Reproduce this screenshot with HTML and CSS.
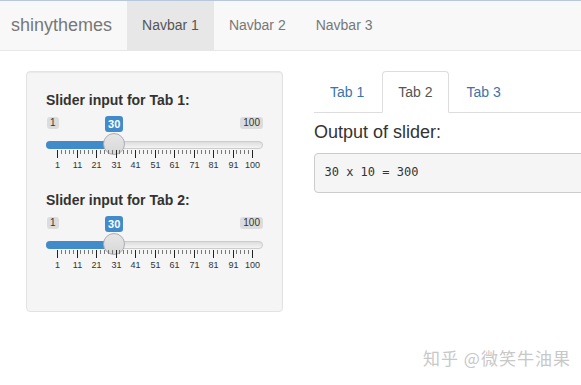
FILE: index.html
```html
<!DOCTYPE html>
<html lang="en">
<head>
    <meta charset="UTF-8">
    <title>shinythemes</title>
    <link rel="stylesheet" href="styles.css">
</head>
<body>

    <nav class="navbar">
        <span class="brand">shinythemes</span>
        <ul class="nav-links">
            <li class="active"><a>Navbar 1</a></li>
            <li><a>Navbar 2</a></li>
            <li><a>Navbar 3</a></li>
        </ul>
    </nav>

    <div class="content">
        <div class="sidebar">
            <div class="form-group">
                <label>Slider input for Tab 1:</label>
                <div class="irs" data-min="1" data-max="100" data-from="30"></div>
            </div>
            <div class="form-group">
                <label>Slider input for Tab 2:</label>
                <div class="irs" data-min="1" data-max="100" data-from="30"></div>
            </div>
        </div>

        <div class="main">
            <ul class="nav-tabs">
                <li><a>Tab 1</a></li>
                <li class="active"><a>Tab 2</a></li>
                <li><a>Tab 3</a></li>
            </ul>
            <h4>Output of slider:</h4>
            <pre>30 x 10 = 300</pre>
        </div>
    </div>

    <div class="watermark">知乎 @微笑牛油果</div>

    <script src="script.js"></script>
</body>
</html>
```

FILE: styles.css
```css
html, body {
    overflow: hidden;
}

body {
    margin: 0;
    font-family: "Liberation Sans", Arial, sans-serif;
    font-size: 14px;
    line-height: 1.42857;
    color: #333;
    background: #fff;
}

/* navbar */
.navbar {
    display: flex;
    align-items: stretch;
    height: 49px;
    background-color: #f8f8f8;
    border-top: 1px solid #b7c8de;
    border-bottom: 1px solid #e7e7e7;
}

.brand {
    padding: 0 15px 0 11px;
    font-size: 18px;
    line-height: 49px;
    color: #777;
}

.nav-links {
    display: flex;
    margin: 0;
    padding: 0;
    list-style: none;
}

.nav-links a {
    display: block;
    padding: 0 15px;
    line-height: 49px;
    color: #777;
}

.nav-links .active a {
    background-color: #e7e7e7;
    color: #555;
}

/* layout */
.content {
    display: flex;
    gap: 31px;
    padding: 20px 0 0 26px;
}

.sidebar {
    flex: 0 0 257px;
    box-sizing: border-box;
    padding: 19px 19px 20px;
    background-color: #f5f5f5;
    border: 1px solid #e3e3e3;
    border-radius: 4px;
    box-shadow: inset 0 1px 1px rgba(0, 0, 0, 0.05);
}

.form-group {
    margin-bottom: 15px;
}

.form-group label {
    display: block;
    margin-bottom: 5px;
    font-weight: bold;
}

/* slider */
.irs {
    position: relative;
    height: 60px;
}

.irs-min, .irs-max, .irs-single {
    position: absolute;
    top: 1px;
    padding: 0 3px;
    font-size: 10px;
    line-height: 12px;
    border-radius: 3px;
    background: rgba(0, 0, 0, 0.1);
    color: #333;
}

.irs-min {
    left: 1px;
}

.irs-max {
    right: 0;
}

.irs-single {
    top: 0;
    padding: 1px 3px;
    font-size: 11px;
    line-height: 14px;
    font-weight: bold;
    background: #428bca;
    color: #fff;
}

.irs-line {
    position: absolute;
    top: 25px;
    left: 0;
    right: 0;
    height: 6px;
    background: linear-gradient(to bottom, #ddd, #f4f4f4);
    border: 1px solid #ccc;
    border-radius: 8px;
}

.irs-bar {
    position: absolute;
    top: 25px;
    left: 0;
    height: 8px;
    background: #428bca;
    border-radius: 8px 0 0 8px;
}

.irs-handle {
    position: absolute;
    top: 17px;
    width: 22px;
    height: 22px;
    box-sizing: border-box;
    border: 1px solid #abadb3;
    border-radius: 50%;
    background: linear-gradient(to bottom, #e6e6e6, #d8d8d8);
}

.irs-tick {
    position: absolute;
    top: 34px;
    width: 1px;
    height: 4px;
    background: #777;
}

.irs-tick.big {
    height: 8px;
    background: #222;
}

.irs-num {
    position: absolute;
    top: 44px;
    font-size: 9px;
    line-height: 11px;
    color: #333;
    transform: translateX(-50%);
}

/* main panel */
.main {
    flex: 0 0 544px;
}

.nav-tabs {
    display: flex;
    margin: 0;
    padding: 0;
    list-style: none;
    border-bottom: 1px solid #ddd;
}

.nav-tabs li {
    margin-bottom: -1px;
}

.nav-tabs a {
    display: block;
    margin-right: 2px;
    padding: 10px 15px;
    line-height: 20px;
    color: #3a75ab;
    border: 1px solid transparent;
    border-radius: 4px 4px 0 0;
}

.nav-tabs .active a {
    color: #555;
    background-color: #fff;
    border-color: #ddd #ddd transparent;
}

h4 {
    margin: 10px 0;
    font-size: 18px;
    font-weight: normal;
    line-height: 1.1;
}

pre {
    margin: 0;
    padding: 9.5px;
    font-family: "DejaVu Sans Mono", "Liberation Mono", monospace;
    font-size: 12px;
    line-height: 19px;
    color: #333;
    background-color: #f5f5f5;
    border: 1px solid #ccc;
    border-radius: 4px;
}

.watermark {
    position: absolute;
    top: 346px;
    left: 423px;
    font-family: "Noto Sans CJK SC", sans-serif;
    font-size: 17px;
    line-height: 24px;
    letter-spacing: 1px;
    color: #c8c8c8;
}
```

FILE: script.js
```js
// draw each slider: labels, track, handle and grid
document.querySelectorAll('.irs').forEach(function(el) {
    const min = parseInt(el.dataset.min);
    const max = parseInt(el.dataset.max);
    const from = parseInt(el.dataset.from);
    const width = el.clientWidth;
    const handle = 22;
    const span = width - handle;

    const pos = (from - min) / (max - min) * span;

    el.innerHTML =
        '<span class="irs-line"></span>' +
        '<span class="irs-bar" style="width: ' + (pos + handle / 2) + 'px"></span>' +
        '<span class="irs-min">' + min + '</span>' +
        '<span class="irs-max">' + max + '</span>' +
        '<span class="irs-single">' + from + '</span>' +
        '<span class="irs-handle" style="left: ' + pos + 'px"></span>';

    const single = el.querySelector('.irs-single');
    single.style.left = (pos + handle / 2 - single.offsetWidth / 2) + 'px';

    for (let i = 0; i <= 50; i++) {
        const x = Math.round(handle / 2 + i / 50 * span);
        const tick = document.createElement('span');
        tick.className = i % 5 === 0 ? 'irs-tick big' : 'irs-tick';
        tick.style.left = x + 'px';
        el.appendChild(tick);

        if (i % 5 === 0) {
            const k = i / 5;
            const num = document.createElement('span');
            num.className = 'irs-num';
            num.style.left = (x + 0.5) + 'px';
            num.textContent = k < 10 ? min + k * 10 : max;
            el.appendChild(num);
        }
    }
});
```
